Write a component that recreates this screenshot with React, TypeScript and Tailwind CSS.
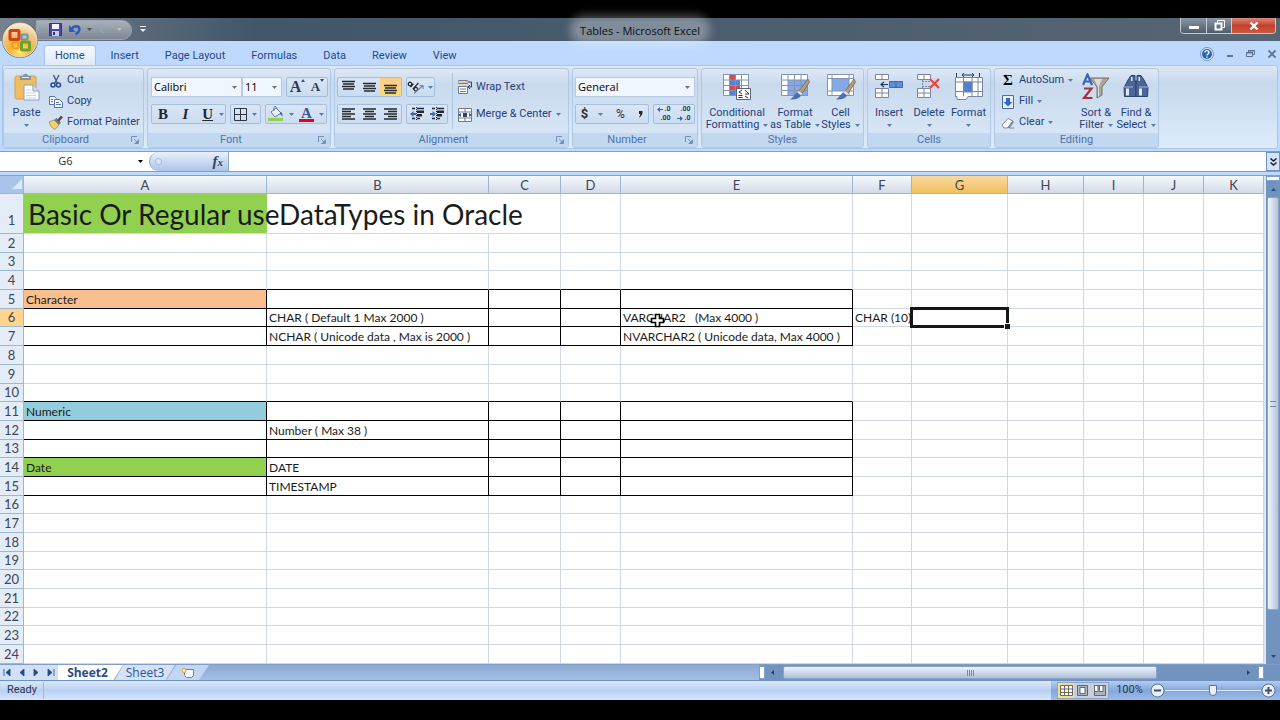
import { ReactNode } from 'react';
import clsx from 'clsx';

type CellStyle = { text?: string; fill?: string };

const COLUMNS = [
  { name: 'A', width: 'w-[243px]' },
  { name: 'B', width: 'w-[222px]' },
  { name: 'C', width: 'w-[72px]' },
  { name: 'D', width: 'w-[60px]' },
  { name: 'E', width: 'w-[232px]' },
  { name: 'F', width: 'w-[59px]' },
  { name: 'G', width: 'w-[96px]' },
  { name: 'H', width: 'w-[76px]' },
  { name: 'I', width: 'w-[60px]' },
  { name: 'J', width: 'w-[60px]' },
  { name: 'K', width: '' },
];

const ROWS = Array.from({ length: 24 }, (_, i) => i + 1);

const CELLS: Record<string, CellStyle> = {
  A1: { text: 'Basic Or Regular useDataTypes in Oracle', fill: 'bg-[#92d050]' },
  A5: { text: 'Character', fill: 'bg-[#f9bf8f]' },
  B6: { text: 'CHAR ( Default 1 Max 2000 )' },
  E6: { text: 'VARCHAR2   (Max 4000 )' },
  F6: { text: 'CHAR (10)' },
  B7: { text: 'NCHAR ( Unicode data , Max is 2000 )' },
  E7: { text: 'NVARCHAR2 ( Unicode data, Max 4000 )' },
  A11: { text: 'Numeric', fill: 'bg-[#93cddd]' },
  B12: { text: 'Number ( Max 38 )' },
  A14: { text: 'Date', fill: 'bg-[#92d050]' },
  B14: { text: 'DATE' },
  B15: { text: 'TIMESTAMP' },
};

const SELECTED = { col: 6, row: 6 };

// Rows 5-7 and 11-15 of columns A-E carry a black outline
const isBoxed = (col: number, row: number) =>
  col <= 4 && ((row >= 5 && row <= 7) || (row >= 11 && row <= 15));

function Arrow({ className = 'text-[#567db1]' }: { className?: string }) {
  return (
    <svg width="5" height="3" viewBox="0 0 5 3" className={clsx('shrink-0', className)}>
      <path d="M0 0h5L2.5 3z" fill="currentColor" />
    </svg>
  );
}

function Group({ title, width, launcher, children }: { title: string; width: string; launcher?: boolean; children: ReactNode }) {
  return (
    <section
      aria-label={title}
      className={clsx(
        'flex shrink-0 flex-col overflow-hidden rounded-[3px] border border-[#b0c8e2] bg-linear-to-b from-[#dee8f5] from-0% via-[#c9daee] via-20% to-[#dbe9f8]',
        width
      )}
    >
      <div className="flex min-h-0 flex-1">{children}</div>
      <div className="flex h-[14px] items-center bg-[#c1d8f0] text-[#4e74ae]">
        <span className="flex-1 text-center leading-[14px]">{title}</span>
        {launcher && (
          <button aria-label={`${title} options`} className="w-4 pl-1">
            <svg width="8" height="8" viewBox="0 0 8 8" fill="none" stroke="#7391b8">
              <path d="M.5 6V.5H6M3 3l3 3" />
              <path d="M7.500 3.500v4h-4" />
              <path d="M7 4v3H4z" fill="#7391b8" stroke="none" />
            </svg>
          </button>
        )}
      </div>
    </section>
  );
}

function SmallButton({ icon, label, arrow }: { icon: ReactNode; label: string; arrow?: boolean }) {
  return (
    <button className="flex h-[21px] items-center gap-1 whitespace-nowrap">
      {icon}
      <span>{label}</span>
      {arrow && <Arrow />}
    </button>
  );
}

function LargeButton({ icon, lines, width }: { icon: ReactNode; lines: string[]; width: string }) {
  return (
    <button className={clsx('flex flex-col items-center pt-1 leading-3', width)}>
      <span className="flex h-[34px] items-start justify-center">{icon}</span>
      <span className="h-3 whitespace-nowrap">{lines[0]}</span>
      <span className="flex h-3 items-center gap-1 whitespace-nowrap">
        {lines[1]}
        <Arrow />
      </span>
    </button>
  );
}

function ButtonBox({ children, className }: { children: ReactNode; className?: string }) {
  return (
    <div className={clsx('flex h-5 items-center justify-around rounded-[2px] border border-[#a3bfe0] bg-linear-to-b from-[#d9e6f5] to-[#cbdcf0]', className)}>
      {children}
    </div>
  );
}

function Dropdown({ label, value, className }: { label: string; value: string; className: string }) {
  return (
    <div className={clsx("relative h-5 border border-[#b5cae4] bg-[#f0f6fd] font-['Open_Sans',sans-serif]", className)}>
      <select aria-label={label} className="h-full w-full appearance-none bg-transparent pl-[2px] text-black outline-none">
        <option>{value}</option>
      </select>
      <Arrow className="pointer-events-none absolute top-2 right-1 text-[#5f7391]" />
    </div>
  );
}

const LONG = [0, 13];

function AlignButton({ label, rows, top = 2, active }: { label: string; rows: number[][]; top?: number; active?: boolean }) {
  return (
    <button
      aria-label={label}
      className={clsx('flex h-full w-[21px] items-center justify-center', active && 'bg-linear-to-b from-[#f9cd8b] to-[#fbdc76]')}
    >
      <svg width="13" height="14" viewBox="0 0 13 14" stroke="#23272e" strokeWidth="1.3">
        {rows.map(([a, b], i) => (
          <path key={i} d={`M${a} ${top + i * 2.5}H${b}`} />
        ))}
      </svg>
    </button>
  );
}

function OfficeLogo() {
  return (
    <svg width="40" height="40" viewBox="0 0 40 40">
      <defs>
        <radialGradient id="orb" cx="50%" cy="85%" r="85%">
          <stop offset="0" stopColor="#ffe873" />
          <stop offset=".4" stopColor="#f4b23c" />
          <stop offset=".7" stopColor="#eec98c" />
          <stop offset="1" stopColor="#fbf3e2" />
        </radialGradient>
      </defs>
      <circle cx="20" cy="20" r="18" fill="#5b6c82" />
      <circle cx="20" cy="20" r="17" fill="url(#orb)" stroke="#f3dcae" />
      <g fill="none">
        <rect x="10" y="10.500" width="9" height="9" rx="1" stroke="#cf4316" strokeWidth="3" />
        <rect x="21.500" y="14.500" width="6" height="5" rx="1" stroke="#5f97c6" strokeWidth="2.200" />
        <rect x="12.500" y="22.500" width="6" height="6" rx="1" stroke="#f59c14" strokeWidth="2.200" />
        <rect x="21.500" y="22" width="8" height="8" rx="1" stroke="#6f9f2c" strokeWidth="3" />
      </g>
    </svg>
  );
}

function TitleBar() {
  return (
    <header className="relative flex h-6 shrink-0 items-center border-b border-[#c9d6e6] bg-linear-to-r from-[#77818d] from-0% via-[#42566a] via-20% to-[#566573]">
      <div className="ml-9 flex h-5 w-[96px] items-center gap-[7px] rounded-r-full border border-[#9ba5b2] bg-linear-to-b from-[#a9b0b9] to-[#7d8793] pl-3">
        <button aria-label="Save">
          <svg width="13" height="13" viewBox="0 0 13 13">
            <path d="M.5.500h12v12H.5z" fill="#4a49a8" stroke="#33338a" />
            <path d="M3 1h7v5H3z" fill="#f2f5ff" />
            <path d="M3 8h7v5H3z" fill="#c9cee8" />
            <path d="M4 9h2v3H4z" fill="#33338a" />
          </svg>
        </button>
        <button aria-label="Undo" className="flex items-center gap-[6px]">
          <svg width="12" height="12" viewBox="0 0 12 12" fill="none">
            <path d="M3 4.500c2-3 7-3 7.500.500 0 2.500-1.500 4-4 5.500" stroke="#2a59c6" strokeWidth="2.400" />
            <path d="M0 1v7h6.500z" fill="#2a59c6" />
          </svg>
          <Arrow className="text-[#4b5565]" />
        </button>
        <button aria-label="Redo" className="flex items-center gap-[7px]">
          <svg width="11" height="11" viewBox="0 0 12 12" fill="none">
            <path d="M10 5c-2-4-8-4-8 0 0 2 1 4 3 5" stroke="#98a5b8" strokeWidth="2" />
          </svg>
          <Arrow className="text-[#bac2cd]" />
        </button>
      </div>
      <button aria-label="Customize Quick Access Toolbar" className="ml-2 text-[#e5edf7]">
        <svg width="6" height="7" viewBox="0 0 6 7">
          <path d="M0 .5h6" stroke="currentColor" />
          <path d="M0 3h6L3 6z" fill="currentColor" />
        </svg>
      </button>
      <div className="pointer-events-none absolute inset-0 flex items-center justify-center">
        <h1 className="rounded-full bg-white/30 px-1 pt-[2px] font-['Open_Sans',sans-serif] leading-4 text-[#0b0f15] shadow-[0_0_8px_6px_rgba(255,255,255,0.3)]">
          Tables - Microsoft Excel
        </h1>
      </div>
      <div className="absolute top-0 right-1 flex h-4 overflow-hidden rounded-b-[4px] border border-t-0 border-[#c3cbd5] text-white">
        <button aria-label="Minimize" className="flex w-[26px] items-center justify-center border-r border-[#c3cbd5] bg-linear-to-b from-[#8c97a4] to-[#4e5c6c]">
          <span className="mt-1 h-[3px] w-[10px] bg-white" />
        </button>
        <button aria-label="Restore" className="flex w-[25px] items-center justify-center border-r border-[#c3cbd5] bg-linear-to-b from-[#8c97a4] to-[#4e5c6c]">
          <svg width="11" height="11" viewBox="0 0 11 11" fill="none" stroke="white">
            <path d="M3.500 2.500v-2h7v7h-2" />
            <rect x="1.500" y="3.500" width="6" height="6" strokeWidth="2" />
          </svg>
        </button>
        <button aria-label="Close" className="flex w-[43px] items-center justify-center bg-linear-to-b from-[#d9897c] via-[#c2402b] via-50% to-[#cf5a3c]">
          <svg width="10" height="8" viewBox="0 0 10 8" stroke="white" strokeWidth="2.400">
            <path d="M1.500.500l7 7M8.500.500l-7 7" />
          </svg>
        </button>
      </div>
    </header>
  );
}

function TabStrip() {
  const tabs = ['Home', 'Insert', 'Page Layout', 'Formulas', 'Data', 'Review', 'View'];
  return (
    <nav className="flex h-[23px] shrink-0 items-end gap-1 bg-[#bfd9fe] pr-1 pl-11">
      {tabs.map((tab) => (
        <button
          key={tab}
          className={clsx(
            'h-5 border border-b-0 px-[10px] pt-px text-[#23498a]',
            tab === 'Home' ? 'rounded-t-[3px] border-[#a4c3ec] bg-linear-to-b from-[#f4f9ff] to-[#e0eaf6]' : 'border-transparent'
          )}
        >
          {tab}
        </button>
      ))}
      <div className="ml-auto flex h-full items-center gap-[13px] text-[#5c6f8c]">
        <button aria-label="Help">
          <svg width="14" height="14" viewBox="0 0 14 14">
            <circle cx="7" cy="7" r="6.500" fill="#d8e8fb" stroke="#6f96c8" />
            <circle cx="7" cy="7" r="5" fill="#2c5fb8" />
            <path d="M5 5.500c0-2.500 4-2.500 4 0C9 7 7 6.800 7 8.500M7 9.500v1.200" fill="none" stroke="white" strokeWidth="1.400" />
          </svg>
        </button>
        <button aria-label="Minimize workbook">
          <span className="mt-1 block h-[2px] w-[6px] bg-[#66758c]" />
        </button>
        <button aria-label="Restore workbook">
          <svg width="9" height="7" viewBox="0 0 9 7" fill="none" stroke="currentColor">
            <path d="M2.500 2V.5h6v4H7M.5 2.500h6v4h-6z" />
            <path d="M0 3h7M2 1h7" />
          </svg>
        </button>
        <button aria-label="Close workbook">
          <svg width="8" height="8" viewBox="0 0 8 8" stroke="currentColor" strokeWidth="1.800">
            <path d="M.5.500l7 7M7.500.500l-7 7" />
          </svg>
        </button>
      </div>
    </nav>
  );
}

function PasteIcon() {
  return (
    <svg width="26" height="28" viewBox="0 0 26 28">
      <rect x="1" y="3" width="21" height="23" rx="2" fill="#eebf62" stroke="#d2a04a" />
      <path d="M6 3h3c0-3 5-3 5 0h3v4H6z" fill="#8b919b" />
      <path d="M8 4h7v1H8z" fill="#e8ebf0" />
      <path d="M10 12h9l6 6v9H10z" fill="#fdfeff" stroke="#8b9dbb" />
      <path d="M19 12v6h6" fill="#d7e0ee" stroke="#8b9dbb" />
      <path d="M12 17h5M12 20h10M12 22.500h10M12 25h10" stroke="#c9d5e6" />
    </svg>
  );
}

function ClipboardGroup() {
  return (
    <Group title="Clipboard" width="w-[141px]" launcher>
      <LargeButton icon={<PasteIcon />} lines={['Paste']} width="w-[45px]" />
      <div className="flex flex-col pt-[1px]">
        <SmallButton
          label="Cut"
          icon={
            <svg width="14" height="14" viewBox="0 0 14 14" fill="none">
              <path d="M4.500 1l4 8.500M10 1L5.500 9.500" stroke="#47597c" strokeWidth="1.400" />
              <circle cx="4" cy="11" r="2" stroke="#2d4d96" strokeWidth="1.600" />
              <circle cx="9.500" cy="11" r="2" stroke="#2d4d96" strokeWidth="1.600" />
            </svg>
          }
        />
        <SmallButton
          label="Copy"
          icon={
            <svg width="14" height="14" viewBox="0 0 14 14" stroke="#5675a9">
              <path d="M.5 1.500h5l2 2v6h-7z" fill="#f4f8fe" />
              <path d="M5.500 4.500h5l3 3v5h-8z" fill="#f4f8fe" />
              <path d="M7 7.500h3M7 9.500h5M2 4.500h2M2 6.500h2" />
            </svg>
          }
        />
        <SmallButton
          label="Format Painter"
          icon={
            <svg width="14" height="14" viewBox="0 0 14 14">
              <path d="M0 6l5-2 5 5-4 4.500C3 12.500 1 9 0 6z" fill="#f3d36a" stroke="#a98a3a" strokeWidth=".8" />
              <path d="M5 4l5 5 2-2.500L7.500 2z" fill="#6d7a90" />
              <path d="M9 5l4-4.500" stroke="#5b4636" strokeWidth="2.600" />
            </svg>
          }
        />
      </div>
    </Group>
  );
}

function FontGroup() {
  return (
    <Group title="Font" width="w-[184px]" launcher>
      <div className="flex flex-col gap-[7px] pt-2 pl-[3px]">
        <div className="flex">
          <Dropdown label="Font name" value="Calibri" className="w-[91px]" />
          <Dropdown label="Font size" value="11" className="w-[40px]" />
          <ButtonBox className="ml-1 w-[42px] font-['Liberation_Serif',serif] font-bold text-[#2c3a52]">
            <button aria-label="Grow font" className="flex items-start">
              <span className="text-base leading-4">A</span>
              <svg width="4" height="3" viewBox="0 0 4 3"><path d="M0 3h4L2 0z" fill="#33508a" /></svg>
            </button>
            <button aria-label="Shrink font" className="flex items-start">
              <span className="text-[13px] leading-4">A</span>
              <svg width="4" height="3" viewBox="0 0 4 3"><path d="M0 0h4L2 3z" fill="#33508a" /></svg>
            </button>
          </ButtonBox>
        </div>
        <div className="flex gap-1">
          <ButtonBox className="w-[75px] font-['Liberation_Serif',serif] text-[15px] font-bold text-[#22262e]">
            <button className="w-[21px]">B</button>
            <button className="w-[21px] italic">I</button>
            <button className="w-[21px] underline">U</button>
            <Arrow />
          </ButtonBox>
          <ButtonBox className="w-[31px]">
            <button aria-label="Borders">
              <svg width="13" height="13" viewBox="0 0 13 13" fill="none" stroke="#2e3440">
                <path d="M.5.500h12v12H.5zM6.500 0v13M0 6.500h13" />
              </svg>
            </button>
            <Arrow />
          </ButtonBox>
          <ButtonBox className="w-[62px]">
            <button aria-label="Fill color">
              <svg width="16" height="16" viewBox="0 0 16 16">
                <path d="M3 6l5-4 5 5-6 4z" fill="#eef3fa" stroke="#60789d" />
                <path d="M6 5V1.500c0-2 3-1 3 1.500" fill="none" stroke="#60789d" />
                <path d="M12 6c2 0 3 2 2.500 4.500L12 8z" fill="#3f68ad" />
                <path d="M0 12h15v3H0z" fill="#92d050" />
              </svg>
            </button>
            <Arrow />
            <button aria-label="Font color" className="flex flex-col items-center font-['Liberation_Serif',serif] font-bold text-[#3a5791]">
              <span className="text-[15px] leading-3">A</span>
              <span className="h-[3px] w-[15px] bg-[#e30613]" />
            </button>
            <Arrow />
          </ButtonBox>
        </div>
      </div>
    </Group>
  );
}

function Indent({ flip }: { flip?: boolean }) {
  return (
    <svg width="15" height="14" viewBox="0 0 15 14">
      <path d="M2 1.500h3M7 1.500h7M7 11.500h3M2 11.500h3" stroke="#23272e" strokeWidth="1.500" />
      <path d="M7 3.500h7v2.500H7zM7 7h5v2.500H7z" fill="#23272e" />
      <path d="M6.500 0v14" stroke="#23272e" strokeDasharray="1 1" />
      <path d={flip ? 'M0 6h2.500V4l3.500 3-3.500 3V8H0z' : 'M6 6H3.500V4L0 7l3.500 3V8H6z'} fill="#3e66b5" />
    </svg>
  );
}

function AlignmentGroup() {
  return (
    <Group title="Alignment" width="w-[235px]" launcher>
      <div className="flex flex-col gap-[7px] pt-2 pl-[2px]">
        <div className="flex gap-1">
          <ButtonBox className="w-[65px]">
            <AlignButton label="Top align" top={1.5} rows={[LONG, [1, 12], LONG, [1, 12]]} />
            <AlignButton label="Middle align" top={3.5} rows={[LONG, [1, 12], LONG, [1, 12]]} />
            <AlignButton label="Bottom align" top={5.5} rows={[LONG, [1, 12], LONG, [1, 12]]} active />
          </ButtonBox>
          <ButtonBox className="w-[29px]">
            <button aria-label="Orientation">
              <svg width="17" height="14" viewBox="0 0 17 14" fill="none" className="overflow-visible">
                <g transform="rotate(42 5 6)" stroke="#23272e" strokeWidth="1.300">
                  <circle cx="1.500" cy="6.500" r="1.800" />
                  <path d="M3.800 4v4.500M7 0v8.500" />
                  <circle cx="9.200" cy="6.500" r="1.800" />
                </g>
                <path d="M6 13.500l9-8M11.500 5.500H15V9" stroke="#7a8699" strokeWidth="1.200" />
              </svg>
            </button>
            <Arrow />
          </ButtonBox>
        </div>
        <div className="flex gap-1">
          <ButtonBox className="w-[65px]">
            <AlignButton label="Align left" rows={[LONG, [0, 9], LONG, [0, 9], LONG]} />
            <AlignButton label="Center" rows={[LONG, [2, 11], LONG, [2, 11], LONG]} />
            <AlignButton label="Align right" rows={[LONG, [4, 13], LONG, [4, 13], LONG]} />
          </ButtonBox>
          <ButtonBox className="w-[42px]">
            <button aria-label="Decrease indent"><Indent /></button>
            <button aria-label="Increase indent"><Indent flip /></button>
          </ButtonBox>
        </div>
      </div>
      <div className="mt-1 ml-1 flex h-[56px] flex-col justify-center gap-[6px] border-l border-[#a9c3e2] pl-[5px]">
        <SmallButton
          label="Wrap Text"
          icon={
            <svg width="14" height="15" viewBox="0 0 14 15">
              <path d="M.5.500h9v3h-9zM.5 6.500h9v7h-9z" fill="#fff" stroke="#6f7c90" />
              <path d="M2 9h6M2 11.500h6" stroke="#6f7c90" />
              <path d="M.5 1h9v2h-9z" fill="#efcf95" />
              <path d="M10 2h3.500v5H11M12 5l-2 2 2 2" fill="none" stroke="#33415c" />
            </svg>
          }
        />
        <SmallButton
          label="Merge & Center"
          arrow
          icon={
            <svg width="14" height="14" viewBox="0 0 14 14">
              <path d="M.5.500h13v13H.5z" fill="#fff" stroke="#6f7c90" />
              <path d="M0 4h14M0 10h14M7 0v4M7 10v4" stroke="#6f7c90" />
              <path d="M0 7l3-2v4zM14 7l-3-2v4z" fill="#35549b" />
              <path d="M5 5h4v4H5z" fill="#35415c" />
            </svg>
          }
        />
      </div>
    </Group>
  );
}

function NumberGroup() {
  return (
    <Group title="Number" width="w-[126px]" launcher>
      <div className="flex flex-col gap-[7px] pt-2 pl-[2px]">
        <Dropdown label="Number format" value="General" className="w-[120px]" />
        <div className="flex gap-1">
          <ButtonBox className="w-[74px] text-xs text-[#2b2f36]">
            <button className="text-[13px] font-bold">$</button>
            <Arrow />
            <button className="px-1">%</button>
            <button aria-label="Comma style">
              <svg width="5" height="8" viewBox="0 0 5 8"><path d="M1 1h3.500c.5 3-1 5-3 6.500L1 7c1-1 1.300-1.500 1.200-3H1z" fill="#22262e" /></svg>
            </button>
          </ButtonBox>
          <ButtonBox className="w-[42px] text-[7px] leading-[9px] font-bold text-[#2b3950]">
            <button aria-label="Increase decimal" className="flex flex-col items-end">
              <span className="flex items-center gap-px">
                <svg width="6" height="5" viewBox="0 0 6 5"><path d="M0 2.500L3 0v5zM3 2h3v1H3z" fill="#3e66b5" /></svg>.0
              </span>
              <span>.00</span>
            </button>
            <button aria-label="Decrease decimal" className="flex flex-col items-end">
              <span>.00</span>
              <span className="flex items-center gap-px">
                <svg width="6" height="5" viewBox="0 0 6 5"><path d="M6 2.500L3 0v5zM0 2h3v1H0z" fill="#3e66b5" /></svg>.0
              </span>
            </button>
          </ButtonBox>
        </div>
      </div>
    </Group>
  );
}

function Brush() {
  return (
    <g>
      <path d="M28 6l-9 12 3 2.500L29.500 9z" fill="#b79d78" stroke="#6f685c" strokeWidth=".8" />
      <path d="M19 17.500l3.500 3-1.500 2-4-3z" fill="#dfe3ea" stroke="#7b8494" strokeWidth=".5" />
      <path d="M17 19.500l4 3.300C19 26 14 27 10 26.500c3-1.500 4-5 7-7z" fill="#4b6fae" />
    </g>
  );
}

function StylesGroup() {
  return (
    <Group title="Styles" width="w-[163px]">
      <LargeButton
        width="w-[70px]"
        lines={['Conditional', 'Formatting']}
        icon={
          <svg width="28" height="27" viewBox="0 0 28 27">
            <path d="M.5 1.500h25v21H.5z" fill="#fff" />
            <path d="M7 2h5v5H7zM7 13h10v4H7z" fill="#d8474b" />
            <path d="M7 7h10v5H7zM7 17h6v5H7z" fill="#5382d6" />
            <path d="M.5 1.500h25v21H.5zM.5 7h25M.5 12.500h25M.5 17.500h25M6.500 1v21M12.500 1v21M18.500 1v21" fill="none" stroke="#8394b0" />
            <path d="M13.500 15.500h14v11h-14z" fill="#fff" stroke="#5b6472" />
            <path d="M19 17l-3 2 3 2M15.500 22.500h4M15.500 24.500h4M22 21h4M22 17l4 4M22 23l3 2" fill="none" stroke="#2b2f36" />
          </svg>
        }
      />
      <LargeButton
        width="w-[46px]"
        lines={['Format', 'as Table']}
        icon={
          <svg width="30" height="27" viewBox="0 0 30 27">
            <path d="M1.500 1.500h26v21h-26z" fill="#fff" />
            <path d="M8 7h20v16H8z" fill="#85a9e6" />
            <path d="M1.500 1.500h26v21h-26zM1.500 7h26M1.500 12.500h26M1.500 17.500h26M8 1v21M14.500 1v21M21 1v21" fill="none" stroke="#8394b0" />
            <Brush />
          </svg>
        }
      />
      <LargeButton
        width="w-[45px]"
        lines={['Cell', 'Styles']}
        icon={
          <svg width="30" height="27" viewBox="0 0 30 27">
            <path d="M1.500 1.500h26v21h-26z" fill="#fff" />
            <path d="M6 6h17v12H6z" fill="#85a9e6" />
            <path d="M1.500 1.500h26v21h-26zM1.500 5.500h26M1.500 18h26M6 1v21M23 1v21" fill="none" stroke="#8394b0" />
            <Brush />
          </svg>
        }
      />
    </Group>
  );
}

function CellsGroup() {
  return (
    <Group title="Cells" width="w-[124px]">
      <LargeButton
        width="w-[42px]"
        lines={['Insert']}
        icon={
          <svg width="28" height="26" viewBox="0 0 28 26" stroke="#7787a2">
            <path d="M.5 1.500h13v5H.5zM7 1.500v5M.5 15.500h13v9H.5zM7 15v9M.5 20h13" fill="#fff" />
            <path d="M14.500 8.500h13v6h-13zM21 8.500v6" fill="#5f8cd6" stroke="#4467a8" />
            <path d="M13 11.500H6M9 9l-3 2.500L9 14" fill="none" stroke="#2b3a58" strokeWidth="1.200" />
          </svg>
        }
      />
      <LargeButton
        width="w-[38px]"
        lines={['Delete']}
        icon={
          <svg width="24" height="26" viewBox="0 0 24 26" stroke="#7787a2">
            <path d="M.5 1.500h13v5H.5zM7 1.500v5M.5 15.500h13v9H.5zM7 15v9M.5 20h13" fill="#fff" />
            <path d="M5.500 7v8M5 8.500h9M5 13.500h9" fill="none" strokeDasharray="2 1" />
            <path d="M13 6l9 9M22 6l-9 9" fill="none" stroke="#e2483d" strokeWidth="2.200" />
          </svg>
        }
      />
      <LargeButton
        width="w-[41px]"
        lines={['Format']}
        icon={
          <svg width="28" height="28" viewBox="0 0 28 28" stroke="#7787a2">
            <path d="M.5 4.500h27v19H13l-2 3H2v-3H.5z" fill="#fff" />
            <path d="M.5 9h27M.5 18.500h27M8.500 5v18M17 5v18M23 5v18" fill="none" />
            <path d="M9 9h8v10H9z" fill="#4f7fd6" />
            <path d="M1.500 0v4M24.500 0v4M7 2h12M9 0L7 2l2 2M17 0l2 2-2 2" fill="none" stroke="#2b3a58" />
          </svg>
        }
      />
    </Group>
  );
}

function EditingGroup() {
  return (
    <Group title="Editing" width="w-[165px]">
      <div className="flex w-[80px] flex-col pt-[1px] pl-[6px]">
        <SmallButton
          label="AutoSum"
          arrow
          icon={<span className="w-[14px] text-center font-['Liberation_Serif',serif] text-[15px] font-bold text-black">Σ</span>}
        />
        <SmallButton
          label="Fill"
          arrow
          icon={
            <svg width="14" height="14" viewBox="-1 0 14 14">
              <path d="M.5.500h11v13H.5z" fill="#e6effb" stroke="#4c6ea8" />
              <path d="M4 3h4v4h2.500L6 11.500 1.500 7H4z" fill="#3268cf" />
            </svg>
          }
        />
        <SmallButton
          label="Clear"
          arrow
          icon={
            <svg width="14" height="12" viewBox="0 0 14 12">
              <path d="M1 8l6-6.500 5 2.500-5.500 7H3z" fill="#fbfcff" stroke="#7c889c" />
              <path d="M6.500 11L12 4v2l-4 5h5" fill="#7c889c" stroke="#7c889c" />
            </svg>
          }
        />
      </div>
      <LargeButton
        width="w-[42px]"
        lines={['Sort &', 'Filter']}
        icon={
          <svg width="28" height="28" viewBox="0 0 28 28" fill="none">
            <path d="M8 5h19l-7 9v8l-5 3V14z" fill="#a9a49e" stroke="#77736e" />
            <path d="M12 6h8l-3 7v10l-1 1V14z" fill="#dedbd6" />
            <path d="M1 12L5.500 1.500 10 12M3 8.500h5" stroke="#3b66b4" strokeWidth="2.200" />
            <path d="M2 15.500h7.500L2 25h8.500" stroke="#a3343f" strokeWidth="2.200" />
          </svg>
        }
      />
      <LargeButton
        width="w-[38px]"
        lines={['Find &', 'Select']}
        icon={
          <svg width="26" height="26" viewBox="0 0 26 26" fill="#4a6596" stroke="#2c4270">
            <path d="M8 2.500h4v4l1 5v12H1.500l-.5-9L5 7z" />
            <path d="M18 2.500h-4v4l-1 5v12h11.500l.5-9L21 7z" />
            <path d="M3 15.500h3v7H3zM16 15.500h3v7h-3zM8 4h1.500v4H8zM15.500 4H17v4h-1.500z" fill="#dfe8f6" stroke="none" />
            <path d="M1 14h9M16 14h9" stroke="#a9bbdc" />
          </svg>
        }
      />
    </Group>
  );
}

function FormulaBar() {
  return (
    <div className="flex h-[21px] shrink-0 border-y border-[#7f9ec9] bg-white">
      <div className="relative flex w-[149px]">
        <input aria-label="Name box" defaultValue="G6" className="w-[131px] bg-transparent text-center font-['Open_Sans',sans-serif] outline-none" />
        <Arrow className="absolute top-2 right-[6px] text-black" />
      </div>
      <div className="flex w-[80px] items-center justify-between rounded-l-full border-r border-l border-[#8aa9d4] bg-linear-to-b from-[#eaf1fb] to-[#abc4e8] px-[5px]">
        <span className="size-[7px] rounded-full border border-[#a3b5d0] bg-[#dce6f5]" />
        <button className="font-['Liberation_Serif',serif] text-[15px] leading-4 font-bold text-[#37425a] italic">
          f<span className="text-[11px]">x</span>
        </button>
      </div>
      <input aria-label="Formula" className="min-w-0 flex-1 px-1 outline-none" />
      <button aria-label="Expand formula bar" className="flex w-[14px] items-center justify-center border border-[#6f92c4] bg-[#d4e3f7]">
        <svg width="7" height="8" viewBox="0 0 7 8" fill="none" stroke="#17202e" strokeWidth="1.500">
          <path d="M.5.500l3 2.500 3-2.500M.5 4.500l3 2.500 3-2.500" />
        </svg>
      </button>
    </div>
  );
}

function Cell({ col, row }: { col: number; row: number }) {
  const id = COLUMNS[col].name + row;
  const cell = CELLS[id];
  const boxed = isBoxed(col, row);
  const boxedBelow = isBoxed(col, row + 1);
  const selected = col === SELECTED.col && row === SELECTED.row;
  // A1 spills over B1 and C1, so the lines between them are not drawn
  const spill = id === 'A1' || id === 'B1';

  return (
    <td
      className={clsx(
        'border-b p-0 align-bottom whitespace-pre',
        row === 1 ? 'pl-1 text-[28px] leading-[38px]' : 'pl-[2px] text-xs leading-4',
        (selected || id === 'E6') && 'relative',
        !spill && 'border-r',
        boxed ? 'border-r-black' : 'border-r-[#d0d7e5]',
        boxed || boxedBelow ? 'border-b-black' : 'border-b-[#d0d7e5]',
        cell?.fill
      )}
    >
      {cell?.text}
      {selected && (
        <span className="absolute -inset-[2px] border-[3px] border-[#15161a]">
          <span className="absolute -right-1 -bottom-1 size-[6px] border-t border-l border-white bg-[#15161a]" />
        </span>
      )}
      {id === 'E6' && (
        <svg width="15" height="15" viewBox="0 0 15 15" className="absolute top-1 left-[29px]">
          <path d="M5.500 1.500h4v4h4v4h-4v4h-4v-4h-4v-4h4z" fill="#fff" stroke="#000" strokeWidth="1.600" />
        </svg>
      )}
    </td>
  );
}

function Sheet() {
  return (
    <div className="flex min-h-0 flex-1 bg-white">
      <div className="min-w-0 flex-1">
        <table className="h-full w-full table-fixed border-separate border-spacing-0 font-[Lato,sans-serif] text-[#1b1b1b]">
          <colgroup>
            <col className="w-6" />
            {COLUMNS.map((c) => (
              <col key={c.name} className={c.width} />
            ))}
          </colgroup>
          <thead>
            <tr className="h-[18px]">
              <th className="border-r border-b border-[#9eb6ce] bg-[#a9c4e9] p-0">
                <svg width="11" height="11" viewBox="0 0 11 11" className="ml-auto">
                  <path d="M10 0v10H0z" fill="#dde8f8" />
                </svg>
              </th>
              {COLUMNS.map((c, col) => (
                <th
                  key={c.name}
                  className={clsx(
                    'border-r border-b border-[#9eb6ce] bg-linear-to-b p-0 text-[13px] leading-4 font-normal text-[#3c4654]',
                    col === SELECTED.col ? 'from-[#f9d99f] to-[#f1c15f]' : 'from-[#f6f9fc] to-[#d3dbe9]'
                  )}
                >
                  {c.name}
                </th>
              ))}
            </tr>
          </thead>
          <tbody>
            {ROWS.map((row) => (
              <tr key={row} className={row === 1 ? 'h-10' : undefined}>
                <th
                  className={clsx(
                    'border-r border-b border-[#9eb6ce] p-0 align-bottom text-[13px] leading-[17px] font-normal text-[#3c4654]',
                    row === 1 && 'pb-1',
                    row === SELECTED.row ? 'bg-[#ffd58d]' : 'bg-[#e4ecf7]'
                  )}
                >
                  {row}
                </th>
                {COLUMNS.map((c, col) => (
                  <Cell key={c.name} col={col} row={row} />
                ))}
              </tr>
            ))}
          </tbody>
        </table>
      </div>
      <div className="flex w-4 shrink-0 flex-col items-center border-l-2 border-[#dbe7f7] bg-[#7393bf]">
        <div className="h-[5px] w-full border border-[#7f9ec9] bg-white" />
        <button aria-label="Scroll up" className="flex h-4 items-center">
          <Arrow className="rotate-180 text-[#274a80]" />
        </button>
        <div className="flex w-3 flex-1 items-center justify-center rounded-[2px] border border-[#8ba3c4] bg-linear-to-r from-[#f0f5fb] to-[#b4c3da]">
          <div className="h-[6px] w-[6px] border-y border-[#7587a3]" />
        </div>
        <div className="h-[38px]" />
        <button aria-label="Scroll down" className="flex h-4 items-center">
          <Arrow className="text-[#274a80]" />
        </button>
      </div>
    </div>
  );
}

function SheetTabs() {
  const navIcons = [
    { label: 'First sheet', d: 'M1 0v7M7 0L3 3.500 7 7z' },
    { label: 'Previous sheet', d: 'M6 0L2 3.500 6 7z' },
    { label: 'Next sheet', d: 'M2 0l4 3.500L2 7z' },
    { label: 'Last sheet', d: 'M1 0l4 3.500L1 7zM7 0v7' },
  ];
  return (
    <div className="flex h-4 shrink-0 border-t border-[#7f9ec9] bg-linear-to-b from-[#8ba9d3] to-[#a5bfe2]">
      <div className="flex w-[58px] items-center justify-around bg-[#cfe0f7]">
        {navIcons.map((icon) => (
          <button key={icon.label} aria-label={icon.label}>
            <svg width="8" height="7" viewBox="0 0 8 7">
              <path d={icon.d} fill="#1e4a8c" stroke="#1e4a8c" strokeWidth=".8" />
            </svg>
          </button>
        ))}
      </div>
      <button className="w-[65px] bg-white pr-[6px] text-center font-['Open_Sans',sans-serif] text-xs leading-[15px] font-bold text-[#2c4c85] [clip-path:polygon(0_0,100%_0,85%_100%,0_100%)]">
        Sheet2
      </button>
      <button className="-ml-2 w-[60px] bg-[#d5e3f7] text-center font-['Open_Sans',sans-serif] text-xs leading-[15px] text-[#2f5597] [clip-path:polygon(14%_0,100%_0,84%_100%,0_100%)]">
        Sheet3
      </button>
      <button
        aria-label="Insert worksheet"
        className="-ml-2 flex w-[42px] items-center justify-center bg-[#c3d7f3] [clip-path:polygon(22%_0,100%_0,76%_100%,0_100%)]"
      >
        <svg width="14" height="11" viewBox="0 0 14 11">
          <path d="M3.500 2.500h9v6l-2 2h-5l-2-2z" fill="#f5f8fd" stroke="#6b83a9" />
          <circle cx="3" cy="3.500" r="2" fill="#fff1c9" stroke="#e0962e" />
        </svg>
      </button>
      <div className="ml-auto flex w-[521px] shrink-0 items-stretch bg-[#7393bf]">
        <div className="my-px w-[6px] border border-[#7f9ec9] bg-white" />
        <button aria-label="Scroll left" className="w-[18px] pl-[5px]">
          <Arrow className="rotate-90 text-[#1f447c]" />
        </button>
        <div className="my-px flex w-[374px] items-center justify-center rounded-[2px] border border-[#8ba3c4] bg-linear-to-b from-[#eef3fa] to-[#aebfd8]">
          <div className="flex h-[6px] gap-px">
            {[0, 1, 2, 3].map((i) => (
              <span key={i} className="w-px bg-[#7587a3]" />
            ))}
          </div>
        </div>
        <button aria-label="Scroll right" className="ml-auto w-4 pl-1">
          <Arrow className="-rotate-90 text-[#1f447c]" />
        </button>
        <div className="my-px mr-4 w-[6px] border border-[#7f9ec9] bg-white" />
      </div>
    </div>
  );
}

function ZoomButton({ label, d }: { label: string; d: string }) {
  return (
    <button aria-label={label}>
      <svg width="15" height="15" viewBox="0 0 15 15">
        <circle cx="7.500" cy="7.500" r="6.500" fill="#e9f0fa" stroke="#5d7296" />
        <path d={d} stroke="#41506a" strokeWidth="2" />
      </svg>
    </button>
  );
}

function StatusBar() {
  return (
    <footer className="flex h-5 shrink-0 items-center border-t border-[#6f92c4] bg-linear-to-b from-[#dde9fa] via-[#b9d0f2] via-50% to-[#d5e5fb] text-[#26344f]">
      <span className="w-11 border-r border-[#9bb7dd] pl-[7px]">Ready</span>
      <div className="ml-auto flex h-full items-center bg-linear-to-b from-[#b3cdf2] via-[#83a8dc] via-50% to-[#9dbdea] pr-1 pl-[6px]">
        <div className="flex h-[17px] border border-[#8fa6c6] bg-[#c6cfdc]">
          <button aria-label="Normal view" className="flex w-4 items-center justify-center bg-[#f8dc8e]">
            <svg width="13" height="11" viewBox="0 0 13 11" fill="#fff" stroke="#6c6a5e">
              <path d="M.5.500h12v10H.5zM.5 4h12M.5 7.500h12M4.500 0v10M8.500 0v10" />
            </svg>
          </button>
          <button aria-label="Page layout view" className="flex w-[17px] items-center justify-center">
            <svg width="11" height="11" viewBox="0 0 11 11" stroke="#5f6978">
              <path d="M.5.500h10v10H.5z" fill="#aab3c0" />
              <path d="M3 2.500h5v6H3z" fill="#fff" />
            </svg>
          </button>
          <button aria-label="Page break preview" className="flex w-[17px] items-center justify-center">
            <svg width="12" height="11" viewBox="0 0 12 11" stroke="#5f6978">
              <path d="M.5.500h11v10H.5z" fill="#aab3c0" />
              <path d="M.5.500H4v6H.5zM5.500.500H9v6H5.500z" fill="#fff" />
            </svg>
          </button>
        </div>
        <button className="w-[41px] text-center">100%</button>
        <ZoomButton label="Zoom out" d="M4 7.500h7" />
        <input
          type="range"
          aria-label="Zoom"
          defaultValue={50}
          className="h-3 w-24 appearance-none bg-[linear-gradient(#dbe6f5,#dbe6f5)] bg-[length:100%_1px] bg-center bg-no-repeat [&::-webkit-slider-thumb]:h-[11px] [&::-webkit-slider-thumb]:w-[8px] [&::-webkit-slider-thumb]:appearance-none [&::-webkit-slider-thumb]:rounded-b-[4px] [&::-webkit-slider-thumb]:border [&::-webkit-slider-thumb]:border-[#5d7296] [&::-webkit-slider-thumb]:bg-[#e9f0fa]"
        />
        <ZoomButton label="Zoom in" d="M4 7.500h7M7.500 4v7" />
      </div>
    </footer>
  );
}

function App() {
  return (
    <div className="flex h-screen w-full flex-col overflow-hidden bg-black pt-[18px] pb-5 font-[Roboto,sans-serif] text-[11px] text-[#1f2c44]">
      <div className="relative flex min-h-0 flex-1 flex-col bg-[#bfdbff]">
        <TitleBar />
        <TabStrip />
        <button aria-label="Office Button" className="absolute top-[2px] left-0">
          <OfficeLogo />
        </button>

        {/* Ribbon */}
        <main className="flex min-h-0 flex-1 flex-col">
          <div className="mx-[2px] flex h-[84px] shrink-0 gap-[3px] rounded-[3px] border border-[#a9c6ea] bg-linear-to-b from-[#dee8f5] from-0% via-[#c7d8ed] via-20% to-[#dcecfb] pt-[2px] text-[#26427a]">
            <ClipboardGroup />
            <FontGroup />
            <AlignmentGroup />
            <NumberGroup />
            <StylesGroup />
            <CellsGroup />
            <EditingGroup />
          </div>
          <div className="h-[2px] shrink-0" />
          <FormulaBar />
          <div className="h-1 shrink-0 border-b border-[#7f9ec9]" />
          <Sheet />
          <SheetTabs />
        </main>
        <StatusBar />
      </div>
    </div>
  );
}

export default App;
